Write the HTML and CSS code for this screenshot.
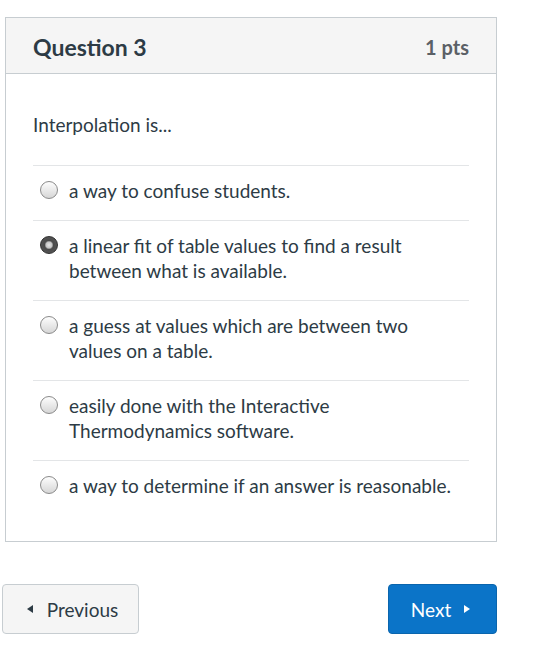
FILE: index.html
```html
<!DOCTYPE html>
<html>
<head>
<meta charset="utf-8">
<link rel="stylesheet" href="styles.css">
</head>
<body>
<div class="card">
  <div class="card-header">
    <h2 class="title">Question 3</h2>
    <span class="pts">1 pts</span>
  </div>
  <div class="card-body">
    <p class="question">Interpolation is...</p>
    <ul class="answers">
      <li class="answer"><span class="radio"></span><span class="label">a way to confuse students.</span></li>
      <li class="answer"><span class="radio checked"></span><span class="label">a linear fit of table values to find a result between what is available.</span></li>
      <li class="answer"><span class="radio"></span><span class="label">a guess at values which are between two values on a table.</span></li>
      <li class="answer"><span class="radio"></span><span class="label">easily done with the Interactive Thermodynamics software.</span></li>
      <li class="answer"><span class="radio"></span><span class="label">a way to determine if an answer is reasonable.</span></li>
    </ul>
  </div>
</div>
<div class="nav">
  <button class="btn btn-prev"><span class="tri tri-left"></span>Previous</button>
  <button class="btn btn-next">Next<span class="tri tri-right"></span></button>
</div>
</body>
</html>
```

FILE: styles.css
```css
html, body {
  margin: 0;
  padding: 0;
  background: #fff;
}
body {
  font-family: Lato, "Open Sans", sans-serif;
  color: #2d3b45;
}
.card {
  margin: 17px 0 0 5px;
  width: 492px;
  box-sizing: border-box;
  border: 1px solid #c7cdd1;
}
.card-header {
  height: 56px;
  box-sizing: border-box;
  background: #f5f5f5;
  border-bottom: 1px solid #c7cdd1;
  display: flex;
  align-items: center;
  justify-content: space-between;
  padding: 2px 27px 0 27px;
}
.title {
  margin: 0;
  font-size: 23px;
  font-weight: 700;
  color: #2d3b45;
}
.pts {
  font-size: 20px;
  font-weight: 700;
  color: #5b6066;
}
.card-body {
  padding: 38px 27px 26px 27px;
}
.question {
  margin: 0 0 27px 0;
  font-size: 19px;
  line-height: 26px;
  color: #2d3b45;
}
.answers {
  list-style: none;
  margin: 0;
  padding: 0;
}
.answer {
  display: flex;
  align-items: flex-start;
  border-top: 1px solid #e3e5e7;
  padding: 12px 0 17px 0;
  font-size: 19px;
  line-height: 25px;
  color: #2d3b45;
}
.label {
  padding-right: 30px;
}
.answer:last-child .label {
  padding-right: 0;
}
.radio {
  flex: none;
  width: 16px;
  height: 16px;
  margin: 3px 11px 0 7px;
  border-radius: 50%;
  border: 1px solid #8a8a8a;
  background: linear-gradient(#fdfdfd, #d6d6d6);
  box-sizing: content-box;
}
.radio.checked {
  border-color: #2e2e2e;
  background: radial-gradient(circle, #e6e6e6 0, #c4c4c4 3px, #4a4a4a 4.5px, #5c5c5c 100%);
}
.nav {
  display: flex;
  justify-content: space-between;
  width: 495px;
  margin: 42px 0 0 2px;
}
.btn {
  height: 50px;
  border-radius: 4px;
  font-family: Lato, "Open Sans", sans-serif;
  font-size: 19px;
  display: flex;
  align-items: center;
  padding: 0;
  cursor: pointer;
}
.btn-prev {
  width: 137px;
  background: #f5f5f5;
  border: 1px solid #c7cdd1;
  color: #2d3b45;
  justify-content: center;
  padding-left: 4px;
}
.btn-next {
  width: 109px;
  background: #0b74c8;
  border: 1px solid #0a65ad;
  color: #fff;
  justify-content: center;
  padding-right: 4px;
}
.tri {
  display: inline-block;
  width: 0;
  height: 0;
  border-top: 4px solid transparent;
  border-bottom: 4px solid transparent;
}
.tri-left {
  border-right: 6px solid #2d3b45;
  margin-right: 14px;
}
.tri-right {
  border-left: 6px solid #fff;
  margin-left: 13px;
}
```
